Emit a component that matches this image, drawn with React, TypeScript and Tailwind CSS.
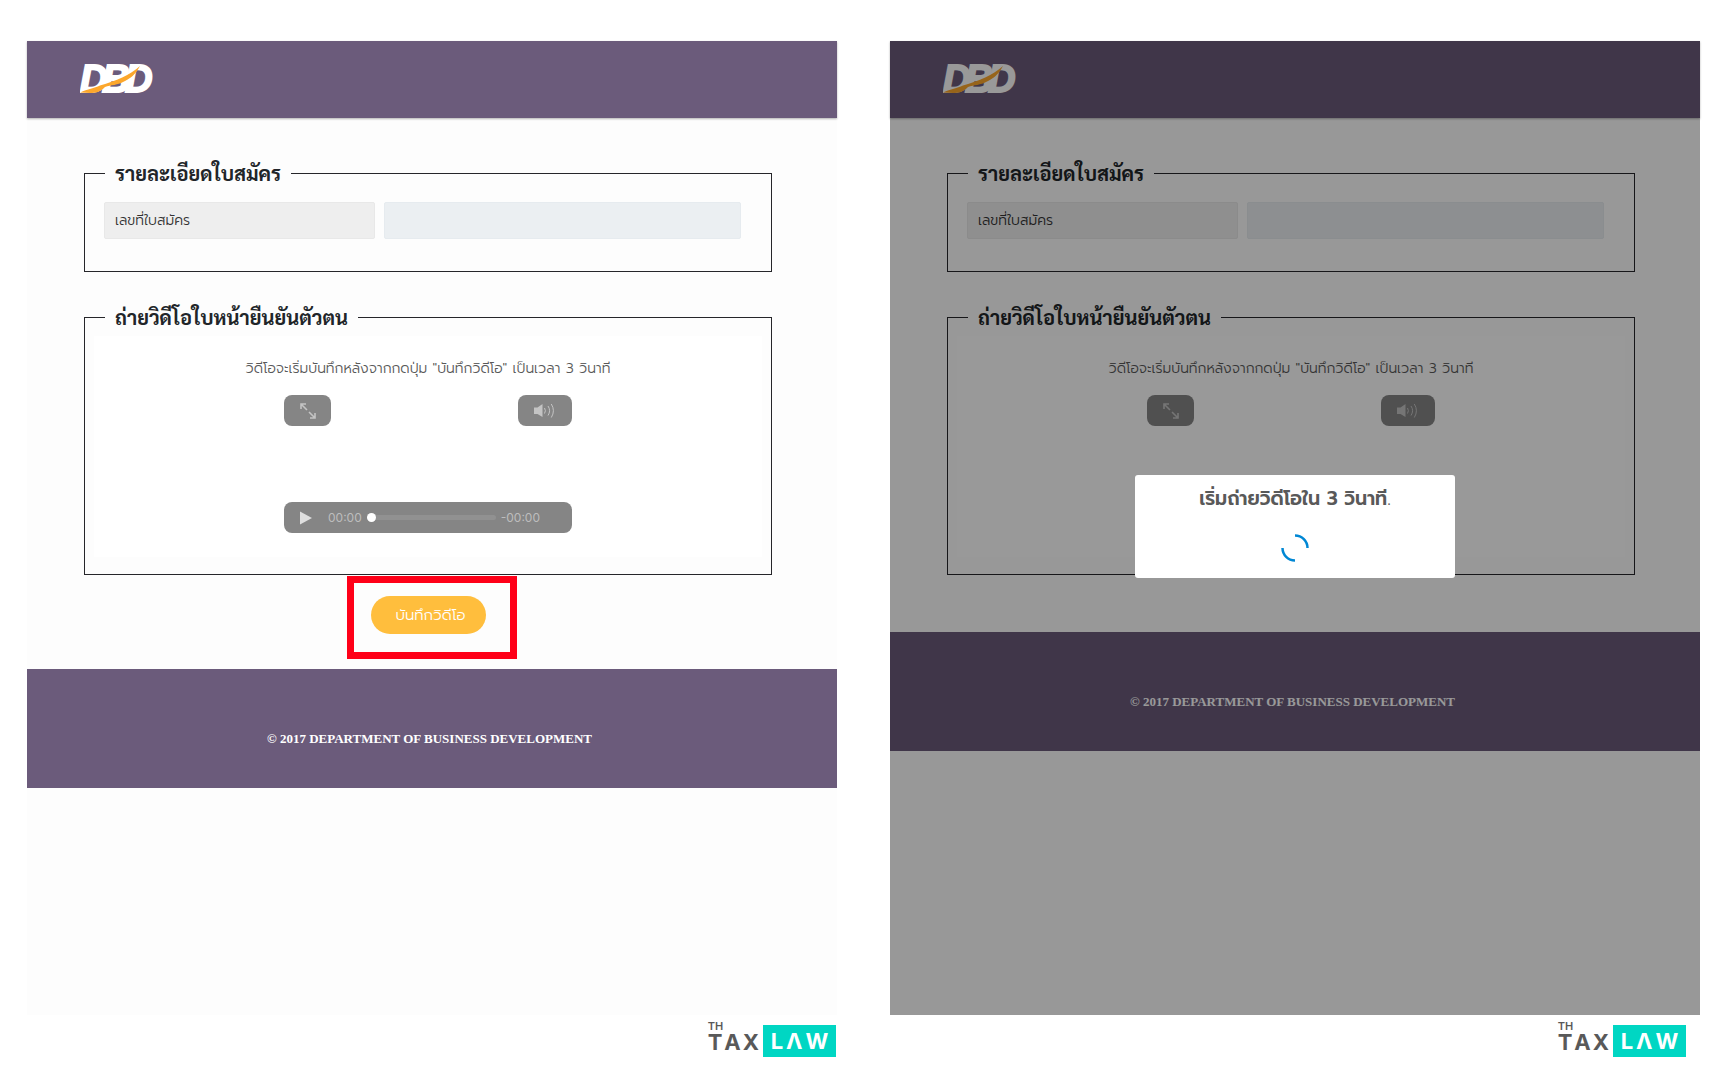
import { useId } from 'react';
import type { ReactNode } from 'react';

const THAI = "font-['Prompt','Kanit','Noto_Sans_Thai','Noto_Sans',sans-serif]";

function DbdLogo() {
  return (
    <a href="#" aria-label="DBD" className="block w-fit">
      <svg width="90" height="56" viewBox="0 0 90 56" className="block">
        <text
          x="0 22 45"
          y="42"
          fontSize="38"
          fontWeight="700"
          fontStyle="italic"
          fill="#ffffff"
          stroke="#ffffff"
          strokeWidth="2"
          className="font-['Liberation_Sans',sans-serif]"
        >
          DBD
        </text>
        <path d="M0 42.500 C8 39 14 38 20 35.500 C36 31 50 25 60 16 C56 24 50 29 43 32 C38 35 31 35 25 37 C20 42 16 43 10 43 Z" fill="#fca72c" />
      </svg>
    </a>
  );
}

function TaxLawLogo() {
  return (
    <div className="flex items-end gap-1 font-['Inter',sans-serif] font-bold text-[#595959]">
      <div className="pb-1">
        <div className="text-[11px] leading-[9px] font-semibold">TH</div>
        <div className="flex gap-[2px] text-[22px] leading-[22px]">
          <span>T</span>
          <span>A</span>
          <span>X</span>
        </div>
      </div>
      <div className="flex h-8 w-[73px] items-center justify-center gap-[3px] bg-[#00d6c3] text-[22px] leading-[22px] text-white">
        <span>L</span>
        <span>Λ</span>
        <span>W</span>
      </div>
    </div>
  );
}

function Section({ title, children }: { title: string; children: ReactNode }) {
  return (
    <fieldset className="border border-[#26262a] pr-[9px] pl-[9px]">
      <legend className="ml-[11px] px-[10px] font-['Sarabun','Noto_Sans_Thai_Looped','Laksaman','Loma','Garuda','Waree',sans-serif] text-[20px] leading-[28px] font-bold text-[#212529]">
        {title}
      </legend>
      {children}
    </fieldset>
  );
}

function VideoPlayer() {
  return (
    <div className="mx-auto flex h-[138px] w-[288px] flex-col justify-between">
      <div className="flex justify-between">
        <button type="button" aria-label="เต็มจอ" className="flex h-[31px] w-[47px] items-center justify-center rounded-lg bg-[#858585]">
          <svg width="16" height="16" viewBox="0 0 16 16" fill="none" stroke="#c4c4c4" strokeWidth="1.6">
            <path d="M1 6V1h5M1 1l6 6M15 10v5h-5M15 15L9 9" />
          </svg>
        </button>
        <button type="button" aria-label="เสียง" className="flex h-[31px] w-[54px] items-center justify-center rounded-lg bg-[#858585]">
          <svg width="22" height="16" viewBox="0 0 22 16" fill="none" stroke="#c4c4c4">
            <path d="M0 4.500h3.500L8.500 1v13L3.500 11H0z" fill="#c4c4c4" stroke="none" />
            <path d="M10.500 5q1.800 2.700 0 5.500M14 3q3.200 4.700 0 9.500M17.300 1q4.200 6.700 0 13.500" />
          </svg>
        </button>
      </div>
      <div className="flex h-[31px] items-center rounded-lg bg-[#858585] pr-8 pl-4 font-['Inter',sans-serif] text-[12px] leading-4 text-[#bdbdbd]">
        <button type="button" aria-label="เล่น" className="mr-4">
          <svg width="12" height="14" viewBox="0 0 12 14" className="block">
            <path d="M0 0.500v13L12 7z" fill="#dedede" />
          </svg>
        </button>
        <span>00:00</span>
        <input
          type="range"
          min={0}
          max={3}
          defaultValue={0}
          aria-label="ตำแหน่งวิดีโอ"
          className="mx-[5px] h-[5px] min-w-0 flex-1 appearance-none rounded-full bg-[#919191] [&::-webkit-slider-thumb]:h-[9px] [&::-webkit-slider-thumb]:w-[9px] [&::-webkit-slider-thumb]:appearance-none [&::-webkit-slider-thumb]:rounded-full [&::-webkit-slider-thumb]:bg-white"
        />
        <span>-00:00</span>
      </div>
    </div>
  );
}

function CountdownDialog() {
  return (
    <div className="absolute inset-0 flex items-center justify-center bg-black/40 pb-1">
      <div role="dialog" aria-label="เริ่มถ่ายวิดีโอ" className="flex h-[103px] w-80 flex-col items-center rounded-[3px] bg-white pt-[9px]">
        <p className="text-[19px] leading-[30px] font-semibold text-[#595959]">
          เริ่มถ่ายวิดีโอใน 3 วินาที<span className="font-light">.</span>
        </p>
        <svg width="28" height="28" viewBox="0 0 28 28" fill="none" stroke="#0087d4" strokeWidth="2.500" className="mt-5">
          <path d="M14 1.500A12.500 12.500 0 0 1 26.500 14M14 26.500A12.500 12.500 0 0 1 1.500 14" />
        </svg>
      </div>
    </div>
  );
}

function Screen({ recording = false }: { recording?: boolean }) {
  const fieldId = useId();

  return (
    <section className={`relative flex-1 bg-[#fdfdfd] ${THAI}`}>
      <header className="h-[77px] bg-[#6b5b7b] pt-[9px] pl-[53px] shadow-[0_1px_2px_rgba(0,0,0,0.3)]">
        <DbdLogo />
      </header>

      <main className="pt-[41px] pr-[65px] pl-[57px]">
        <Section title="รายละเอียดใบสมัคร">
          <div className="mt-[15px] mr-[21px] mb-8 ml-[10px] grid grid-cols-[271fr_357fr] gap-[9px]">
            <label
              htmlFor={fieldId}
              className="h-[37px] rounded-xs border border-[#e8e8e8] bg-[#eeeeee] pl-[10px] text-[14px] leading-[35px] font-light text-[#333333]"
            >
              เลขที่ใบสมัคร
            </label>
            <input id={fieldId} type="text" readOnly className="h-[37px] min-w-0 rounded-xs border border-[#e6ebef] bg-[#ebeff2]" />
          </div>
        </Section>

        <div className="mt-[31px]">
          <Section title="ถ่ายวิดีโอใบหน้ายืนยันตัวตน">
            <div className="mt-[5px] mb-[17px] bg-white pt-[21px] pb-6">
              <p className="mb-[14px] text-center text-[14px] leading-6 font-light text-[#595959]">
                วิดีโอจะเริ่มบันทึกหลังจากกดปุ่ม "บันทึกวิดีโอ" เป็นเวลา 3 วินาที
              </p>
              <VideoPlayer />
            </div>
          </Section>
        </div>
      </main>

      {recording ? (
        <div className="h-[57px]" />
      ) : (
        <div className="mx-auto mt-px mb-[10px] w-[170px] border-7 border-[#ff0018] px-[17px] pt-[13px] pb-[18px]">
          <button
            type="button"
            className="block h-[38px] w-[115px] rounded-full bg-[#ffbe3d] pl-1 text-[15px] leading-[38px] font-light text-white"
          >
            บันทึกวิดีโอ
          </button>
        </div>
      )}

      <footer className="bg-[#6b5b7b] pt-[60px] pr-[5px] pb-[39px] text-center font-['Liberation_Serif',serif] text-[13px] leading-[20px] font-bold text-white">
        © 2017 DEPARTMENT OF BUSINESS DEVELOPMENT
      </footer>

      {recording && <CountdownDialog />}
    </section>
  );
}

export default function App() {
  return (
    <div className="grid min-h-screen grid-cols-2 gap-[53px] bg-white pt-[41px] pr-[17px] pl-[27px]">
      <div className="flex flex-col">
        <Screen />
        <div className="flex h-[60px] items-start justify-end pt-[7px] pr-px">
          <TaxLawLogo />
        </div>
      </div>
      <div className="flex flex-col">
        <Screen recording />
        <div className="flex h-[60px] items-start justify-end pt-[7px] pr-[14px]">
          <TaxLawLogo />
        </div>
      </div>
    </div>
  );
}
